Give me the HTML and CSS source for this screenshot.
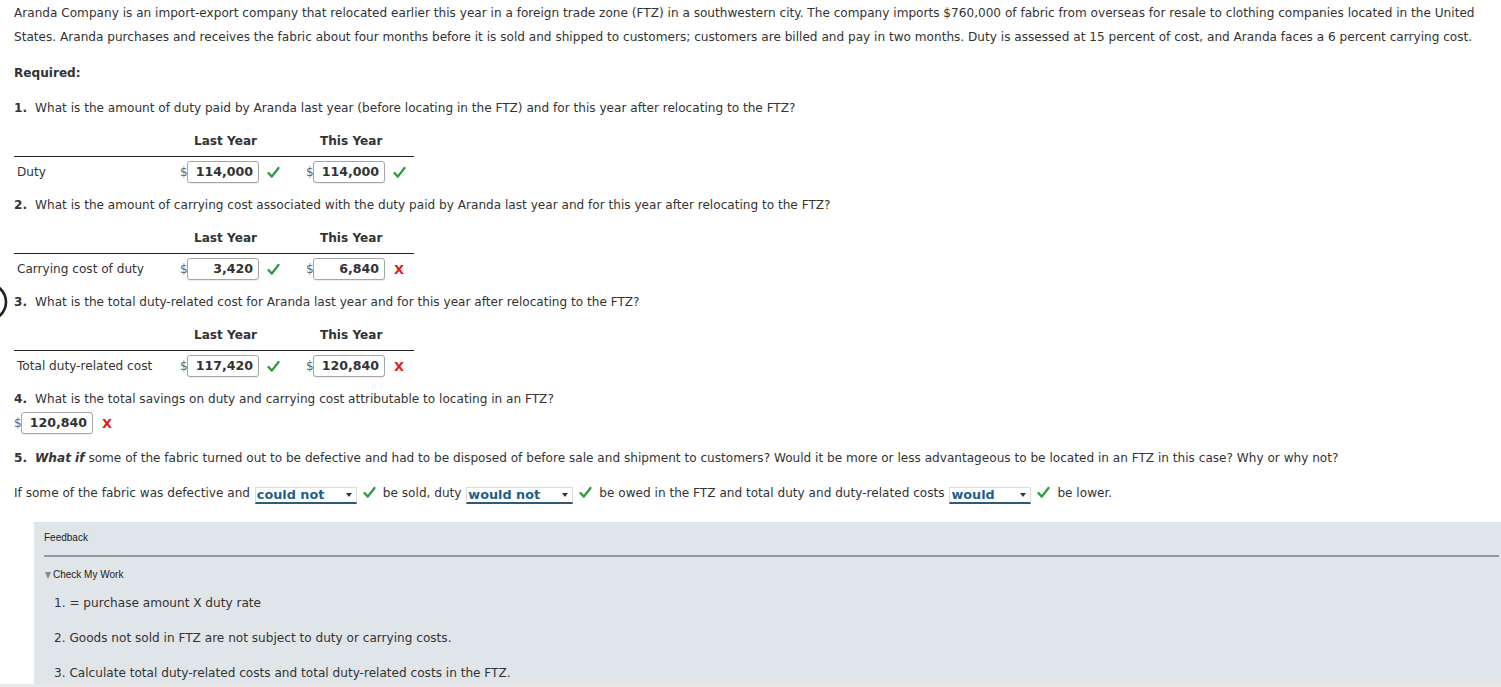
FILE: index.html
```html
<!DOCTYPE html>
<html>
<head>
<meta charset="utf-8">
<link rel="stylesheet" href="styles.css">
</head>
<body>
<div class="page">
  <svg class="marker" width="30" height="50" viewBox="0 0 30 50"><circle cx="-12" cy="24" r="18" fill="none" stroke="#222" stroke-width="2.6"/></svg>
  <div class="content">
    <p class="intro">Aranda Company is an import-export company that relocated earlier this year in a foreign trade zone (FTZ) in a southwestern city. The company imports $760,000 of fabric from overseas for resale to clothing companies located in the United<br>States. Aranda purchases and receives the fabric about four months before it is sold and shipped to customers; customers are billed and pay in two months. Duty is assessed at 15 percent of cost, and Aranda faces a 6 percent carrying cost.</p>
    <p class="req">Required:</p>

    <p class="q"><b class="num">1.</b>What is the amount of duty paid by Aranda last year (before locating in the FTZ) and for this year after relocating to the FTZ?</p>
    <div class="grid">
      <div class="hd"></div><div class="hd">Last Year</div><div class="hd">This Year</div>
      <div class="lbl">Duty</div>
      <div class="cell"><span class="cur">$</span><span class="inp">114,000</span><svg class="ok" width="13" height="13" viewBox="0 0 13 13"><path d="M1.5 7 L4.8 10.6 L11.5 2"/></svg></div>
      <div class="cell"><span class="cur">$</span><span class="inp">114,000</span><svg class="ok" width="13" height="13" viewBox="0 0 13 13"><path d="M1.5 7 L4.8 10.6 L11.5 2"/></svg></div>
    </div>

    <p class="q q2"><b class="num">2.</b>What is the amount of carrying cost associated with the duty paid by Aranda last year and for this year after relocating to the FTZ?</p>
    <div class="grid">
      <div class="hd"></div><div class="hd">Last Year</div><div class="hd">This Year</div>
      <div class="lbl">Carrying cost of duty</div>
      <div class="cell"><span class="cur">$</span><span class="inp">3,420</span><svg class="ok" width="13" height="13" viewBox="0 0 13 13"><path d="M1.5 7 L4.8 10.6 L11.5 2"/></svg></div>
      <div class="cell"><span class="cur">$</span><span class="inp">6,840</span><span class="bad">X</span></div>
    </div>

    <p class="q q3"><b class="num">3.</b>What is the total duty-related cost for Aranda last year and for this year after relocating to the FTZ?</p>
    <div class="grid">
      <div class="hd"></div><div class="hd">Last Year</div><div class="hd">This Year</div>
      <div class="lbl">Total duty-related cost</div>
      <div class="cell"><span class="cur">$</span><span class="inp">117,420</span><svg class="ok" width="13" height="13" viewBox="0 0 13 13"><path d="M1.5 7 L4.8 10.6 L11.5 2"/></svg></div>
      <div class="cell"><span class="cur">$</span><span class="inp">120,840</span><span class="bad">X</span></div>
    </div>

    <p class="q q4"><b class="num">4.</b>What is the total savings on duty and carrying cost attributable to locating in an FTZ?</p>
    <div class="single"><span class="cur">$</span><span class="inp">120,840</span><span class="bad">X</span></div>

    <p class="q q5"><b class="num">5.</b><b><i>What if</i></b> some of the fabric turned out to be defective and had to be disposed of before sale and shipment to customers? Would it be more or less advantageous to be located in an FTZ in this case? Why or why not?</p>
    <p class="fill">If some of the fabric was defective and <span class="sel">could not</span><svg class="ok ok2" width="13" height="13" viewBox="0 0 13 13"><path d="M1.5 7 L4.8 10.6 L11.5 2"/></svg>be sold, duty <span class="sel sel2">would not</span><svg class="ok ok2" width="13" height="13" viewBox="0 0 13 13"><path d="M1.5 7 L4.8 10.6 L11.5 2"/></svg>be owed in the FTZ and total duty and duty-related costs <span class="sel sel3">would</span><svg class="ok ok2" width="13" height="13" viewBox="0 0 13 13"><path d="M1.5 7 L4.8 10.6 L11.5 2"/></svg>be lower.</p>
  </div>

  <div class="feedback">
    <div class="fb-title">Feedback</div>
    <div class="fb-check"><span class="tri"></span>Check My Work</div>
    <p class="fb-item">1. = purchase amount X duty rate</p>
    <p class="fb-item">2. Goods not sold in FTZ are not subject to duty or carrying costs.</p>
    <p class="fb-item">3. Calculate total duty-related costs and total duty-related costs in the FTZ.</p>
  </div>
  <div class="bottom-strip"></div>
</div>
</body>
</html>
```

FILE: styles.css
```css
html, body {
  margin: 0;
  padding: 0;
  background: #fff;
}
.page {
  position: relative;
  width: 1501px;
  height: 687px;
  overflow: hidden;
  font-family: "DejaVu Sans", Verdana, sans-serif;
  font-size: 12.1px;
  color: #333;
}
.marker {
  position: absolute;
  left: 0;
  top: 278px;
}
.content {
  padding: 1px 14px 0 14px;
}
p {
  margin: 0;
  line-height: 24px;
}
.intro {
  white-space: nowrap;
}
.req {
  margin-top: 12px;
  font-weight: bold;
}
.q {
  margin-top: 11px;
}
.q2, .q3, .q4 {
  margin-top: 4px;
}
.num {
  margin-right: 8px;
}
.grid {
  display: grid;
  grid-template-columns: 163px 126px 111px;
  width: 400px;
  margin-top: 9px;
}
.hd {
  font-weight: bold;
  padding-left: 17px;
  line-height: 24px;
  padding-bottom: 3px;
  border-bottom: 1px solid #222;
}
.lbl {
  padding-left: 3px;
  line-height: 22px;
  padding-top: 4px;
}
.cell {
  display: flex;
  align-items: center;
  padding-top: 4px;
  padding-bottom: 6px;
  padding-left: 3px;
}
.cur {
  color: #666;
  width: 7px;
  line-height: 22px;
}
.inp {
  box-sizing: border-box;
  width: 72px;
  height: 22px;
  border: 1px solid #a6a6a6;
  border-radius: 3px;
  background: #fff;
  font-weight: bold;
  font-size: 12.6px;
  text-align: right;
  padding-right: 5px;
  line-height: 20px;
  color: #333;
  box-shadow: 0 1px 1px rgba(0,0,0,0.08);
}
.ok {
  margin-left: 8px;
  flex: none;
}
.ok path {
  fill: none;
  stroke: #2f9a3d;
  stroke-width: 2.3;
  stroke-linecap: round;
  stroke-linejoin: round;
}
.bad {
  margin-left: 9px;
  color: #dd1c1c;
  font-weight: bold;
  font-family: "DejaVu Sans", Verdana, sans-serif;
  font-size: 13px;
}
.single {
  display: flex;
  align-items: center;
  margin-top: 1px;
  height: 22px;
}
.q5 {
  margin-top: 12px;
}
.fill {
  margin-top: 11px;
  white-space: nowrap;
}
.sel {
  display: inline-block;
  position: relative;
  box-sizing: border-box;
  width: 102px;
  height: 17px;
  line-height: 14px;
  vertical-align: -2px;
  border: 1px solid #dcdcdc;
  border-bottom: 2px solid #2c5a7a;
  color: #1e5e8c;
  font-weight: bold;
  font-size: 12.8px;
  padding-left: 1px;
  margin-left: 1px;
}
.sel2 { width: 107px; }
.sel3 { width: 82px; }
.sel::after {
  content: "";
  position: absolute;
  right: 4px;
  top: 5px;
  border-left: 3.5px solid transparent;
  border-right: 3.5px solid transparent;
  border-top: 4px solid #333;
}
.ok2 {
  vertical-align: -2px;
  margin: 0 7px 0 6px;
}
.feedback {
  margin: 17px 0 0 34px;
  height: 163px;
  background: #dfe5e8;
  padding: 0 2px 0 10px;
}
.fb-title {
  font-family: "Liberation Sans", Arial, sans-serif;
  font-size: 10px;
  color: #222;
  line-height: 14px;
  padding-top: 9px;
  padding-bottom: 10px;
  border-bottom: 2px solid #8f989c;
}
.fb-check {
  font-family: "Liberation Sans", Arial, sans-serif;
  font-size: 10px;
  color: #222;
  line-height: 14px;
  margin-top: 11px;
  display: flex;
  align-items: center;
}
.tri {
  width: 0;
  height: 0;
  border-left: 3px solid transparent;
  border-right: 3px solid transparent;
  border-top: 7px solid #888;
  margin: 0 2px 0 1px;
}
.fb-item {
  padding-left: 10px;
  line-height: 24px;
  margin-top: 11px;
}
.fb-check + .fb-item {
  margin-top: 9px;
}
.bottom-strip {
  position: absolute;
  left: 0;
  bottom: 0;
  width: 100%;
  height: 3px;
  background: #e8e8e8;
}
```
